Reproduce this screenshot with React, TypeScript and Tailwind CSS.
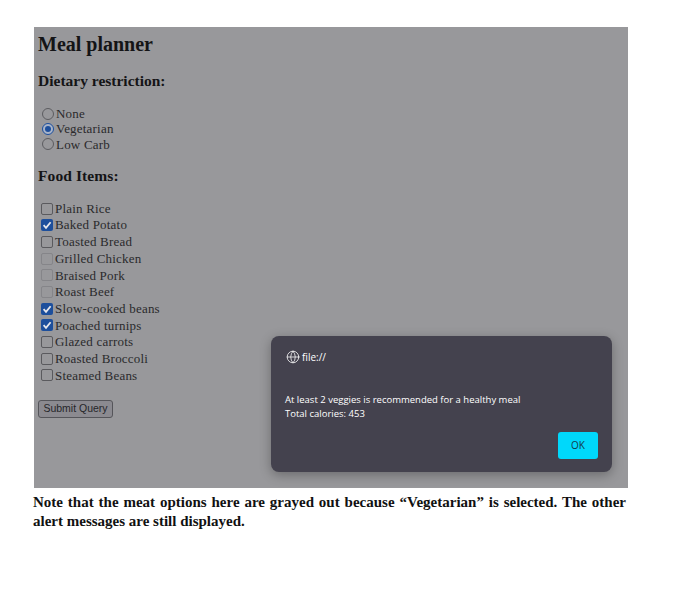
import { Globe } from 'lucide-react';

const diets = ['None', 'Vegetarian', 'Low Carb'];

const foods = [
  { name: 'Plain Rice' },
  { name: 'Baked Potato', checked: true },
  { name: 'Toasted Bread' },
  { name: 'Grilled Chicken', disabled: true },
  { name: 'Braised Pork', disabled: true },
  { name: 'Roast Beef', disabled: true },
  { name: 'Slow-cooked beans', checked: true },
  { name: 'Poached turnips', checked: true },
  { name: 'Glazed carrots' },
  { name: 'Roasted Broccoli' },
  { name: 'Steamed Beans' },
];

const Radio = ({ on }: { on: boolean }) =>
  on ? (
    <span className="flex h-[12px] w-[12px] items-center justify-center rounded-full border-[1.5px] border-[#1d4f9c] bg-[#a9b4c8]">
      <span className="h-[6px] w-[6px] rounded-full bg-[#1d4f9c]" />
    </span>
  ) : (
    <span className="h-[12px] w-[12px] rounded-full border-[1.5px] border-[#5c5c60]" />
  );

const Checkbox = ({ checked, disabled }: { checked?: boolean; disabled?: boolean }) => {
  if (checked) {
    return (
      <span className="flex h-[12px] w-[12px] items-center justify-center rounded-[2px] bg-[#1d4f9c]">
        <svg viewBox="0 0 12 12" className="h-[12px] w-[12px]" fill="none" stroke="#e8e8ec" strokeWidth="1.8">
          <path d="M2.6 6.2 L5 8.8 L9.6 3.2" />
        </svg>
      </span>
    );
  }
  return (
    <span
      className={
        disabled
          ? 'h-[12px] w-[12px] rounded-[2px] border border-[#858589]'
          : 'h-[12px] w-[12px] rounded-[2px] border-[1.5px] border-[#5a5a5e]'
      }
    />
  );
};

export default function App() {
  return (
    <div className="h-[602px] w-[679px] bg-white pt-[27px] font-['Liberation_Serif',serif]">
      <div className="relative ml-[34px] h-[461px] w-[594px] bg-[#98989b] pl-[4px] text-[#141416]">
        <h1 className="pt-[5px] text-[20px] leading-[24px] font-bold">Meal planner</h1>
        <h2 className="mt-[15px] text-[15.5px] leading-[20px] font-bold">Dietary restriction:</h2>
        <div className="mt-[15px] ml-[4px] flex flex-col">
          {diets.map((d) => (
            <div key={d} className="flex h-[15.4px] items-center gap-[2px] text-[13px] tracking-[0.2px] text-[#2a2a2c]">
              <Radio on={d === 'Vegetarian'} />
              <span>{d}</span>
            </div>
          ))}
        </div>
        <h2 className="mt-[14px] text-[15.5px] leading-[20px] font-bold tracking-[0.1px]">Food Items:</h2>
        <div className="mt-[14px] ml-[3px] flex flex-col">
          {foods.map((f) => (
            <div key={f.name} className="flex h-[16.7px] items-center gap-[2px] text-[13px] tracking-[0.2px] text-[#2a2a2c]">
              <Checkbox checked={f.checked} disabled={f.disabled} />
              <span>{f.name}</span>
            </div>
          ))}
        </div>
        <button className="mt-[16px] flex h-[18px] w-[75px] items-center justify-center rounded-[3px] border border-[#55555a] bg-[#8b8a90] font-['Liberation_Sans',sans-serif] text-[10.5px] text-[#26262a]">
          Submit Query
        </button>

        <div className="absolute top-[309px] left-[237px] flex h-[136px] w-[341px] flex-col rounded-[8px] bg-[#44424e] px-[14px] pt-[14px] font-['Open_Sans',sans-serif] text-white shadow-[0_3px_12px_rgba(0,0,0,0.3)]">
          <div className="flex items-center gap-[2px] pl-[1px] text-[10px] leading-[14px]">
            <Globe size={14} strokeWidth={1.3} />
            <span>file://</span>
          </div>
          <p className="mt-[29px] text-[9.5px] leading-[14px]">
            At least 2 veggies is recommended for a healthy meal
            <br />
            Total calories: 453
          </p>
          <div className="mt-auto mb-[13px] flex justify-end">
            <button className="h-[27px] w-[40px] rounded-[3px] bg-[#00d8fb] text-[10px] text-[#143a48]">OK</button>
          </div>
        </div>
      </div>
      <p className="mt-[5px] ml-[33px] w-[593px] text-justify font-['Liberation_Serif',serif] text-[15px] leading-[18.5px] font-bold text-[#111]">
        Note that the meat options here are grayed out because “Vegetarian” is selected. The other alert messages are still displayed.
      </p>
    </div>
  );
}
